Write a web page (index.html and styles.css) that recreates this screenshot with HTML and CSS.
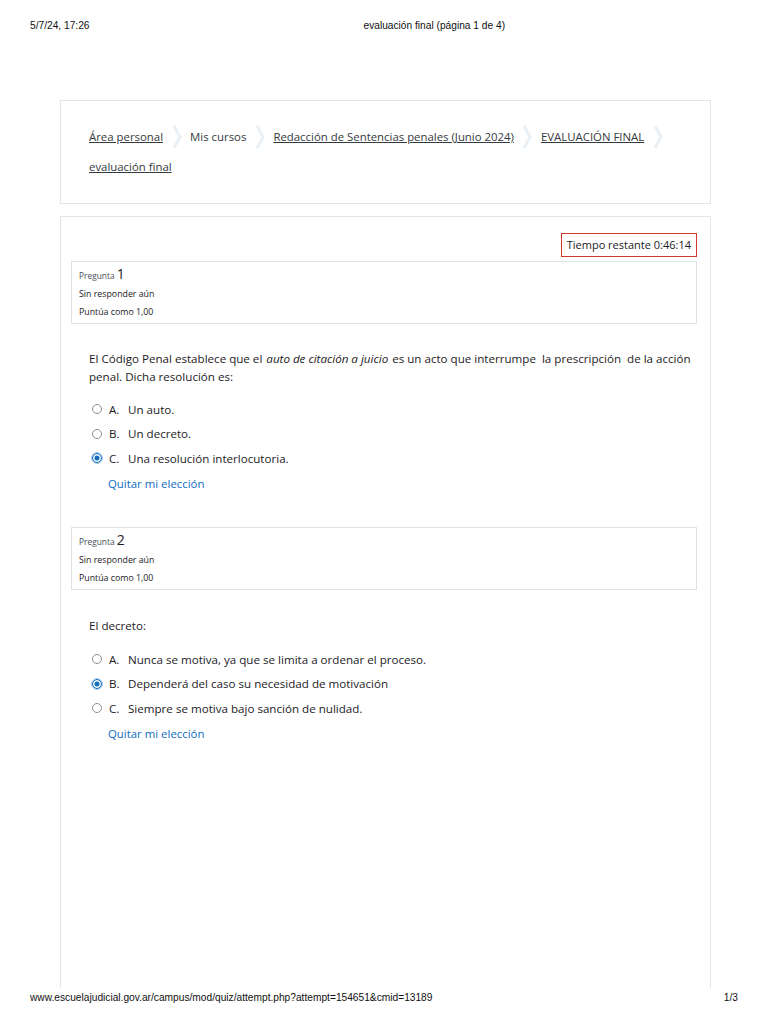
FILE: index.html
```html
<!DOCTYPE html>
<html lang="es">

<head>
    <meta charset="UTF-8">
    <meta name="viewport" content="width=device-width, initial-scale=1.0">
    <title>evaluación final (página 1 de 4)</title>
    <link rel="stylesheet" href="styles.css">
</head>

<body>
    <div class="print-head">
        <span class="print-date">5/7/24, 17:26</span>
        <span class="print-title">evaluación final (página 1 de 4)</span>
    </div>

    <div class="page">
        <nav class="crumbs">
            <a href="#">Área personal</a>
            <span class="sep"><svg viewBox="0 0 10 24" width="10" height="24"><polyline points="2,1 8,12 2,23" /></svg></span>
            <span class="plain">Mis cursos</span>
            <span class="sep"><svg viewBox="0 0 10 24" width="10" height="24"><polyline points="2,1 8,12 2,23" /></svg></span>
            <a href="#">Redacción de Sentencias penales (Junio 2024)</a>
            <span class="sep"><svg viewBox="0 0 10 24" width="10" height="24"><polyline points="2,1 8,12 2,23" /></svg></span>
            <a href="#">EVALUACIÓN FINAL</a>
            <span class="sep"><svg viewBox="0 0 10 24" width="10" height="24"><polyline points="2,1 8,12 2,23" /></svg></span>
            <a href="#" class="last">evaluación final</a>
        </nav>

        <div class="quiz">
            <div class="timer-row">
                <div class="timer">Tiempo restante 0:46:14</div>
            </div>

            <div class="info">
                <div class="qno">Pregunta <span class="num">1</span></div>
                <div class="state">Sin responder aún</div>
                <div class="grade">Puntúa como 1,00</div>
            </div>

            <div class="question">
                <p class="qtext">El Código Penal establece que el <em>auto de citación a juicio</em> es un acto que interrumpe&nbsp; la prescripción&nbsp; de la acción penal. Dicha resolución es:</p>
                <div class="answers">
                    <label class="option"><span class="radio"></span><span class="letter">A.</span><span>Un auto.</span></label>
                    <label class="option"><span class="radio"></span><span class="letter">B.</span><span>Un decreto.</span></label>
                    <label class="option"><span class="radio checked"></span><span class="letter">C.</span><span>Una resolución interlocutoria.</span></label>
                </div>
                <a href="#" class="clear">Quitar mi elección</a>
            </div>

            <div class="info second">
                <div class="qno">Pregunta <span class="num">2</span></div>
                <div class="state">Sin responder aún</div>
                <div class="grade">Puntúa como 1,00</div>
            </div>

            <div class="question">
                <p class="qtext short">El decreto:</p>
                <div class="answers">
                    <label class="option"><span class="radio"></span><span class="letter">A.</span><span>Nunca se motiva, ya que se limita a ordenar el proceso.</span></label>
                    <label class="option"><span class="radio checked"></span><span class="letter">B.</span><span>Dependerá del caso su necesidad de motivación</span></label>
                    <label class="option"><span class="radio"></span><span class="letter">C.</span><span>Siempre se motiva bajo sanción de nulidad.</span></label>
                </div>
                <a href="#" class="clear">Quitar mi elección</a>
            </div>
        </div>
    </div>

    <div class="print-foot">
        <span>www.escuelajudicial.gov.ar/campus/mod/quiz/attempt.php?attempt=154651&amp;cmid=13189</span>
        <span>1/3</span>
    </div>
</body>

</html>
```

FILE: styles.css
```css
body {
    margin: 0;
    padding: 0;
    background: #fff;
    font-family: "Open Sans", sans-serif;
    color: #1d2125;
    width: 768px;
    height: 1024px;
    overflow: hidden;
}

a {
    color: #343a40;
}

.print-head,
.print-foot {
    font-family: "Liberation Sans", Arial, sans-serif;
    font-size: 10.2px;
    color: #111;
    display: flex;
    padding: 0 30px;
}

.print-head {
    padding-top: 20px;
    height: 12px;
    line-height: 12px;
}

.print-title {
    margin-left: 274px;
}

.print-foot {
    justify-content: space-between;
    line-height: 12px;
    margin-top: 4px;
}

.page {
    padding: 0 57px 0 60px;
    margin-top: 68px;
}

/* breadcrumb */
.crumbs {
    border: 1px solid #e3e6e9;
    padding: 21px 28px;
    display: flex;
    flex-wrap: wrap;
    align-items: center;
    font-size: 11.4px;
    line-height: 30px;
}

.crumbs a,
.crumbs .plain {
    color: #343a40;
}

.crumbs .sep {
    display: flex;
    align-items: center;
    width: 27px;
    justify-content: center;
}

.crumbs .sep polyline {
    fill: none;
    stroke: #e9f0f6;
    stroke-width: 3;
}

.crumbs .last {
    flex-basis: 100%;
}

/* quiz */
.quiz {
    margin-top: 12px;
    border: 1px solid #e3e6e9;
    border-bottom: none;
    padding: 16px 13px 0 10px;
    height: 755px;
}

.timer-row {
    display: flex;
    justify-content: flex-end;
}

.timer {
    border: 1px solid #d0382b;
    height: 22px;
    line-height: 22px;
    padding: 0 5px;
    font-size: 11px;
}

.info {
    margin-top: 4px;
    border: 1px solid #dee2e6;
    padding: 3px 7px 2px;
    font-size: 8.8px;
}

.info.second {
    margin-top: 34px;
}

.qno {
    height: 18px;
    line-height: 18px;
    color: #495057;
    font-size: 8.4px;
}

.qno .num {
    font-size: 14px;
    color: #1d2125;
}

.state {
    margin-top: 2px;
    height: 18px;
    line-height: 18px;
}

.grade {
    height: 18px;
    line-height: 18px;
}

.question {
    padding-left: 18px;
}

.qtext {
    margin: 26px 0 0;
    font-size: 11.6px;
    line-height: 18px;
}

.qtext em {
    margin: 0 1px;
}

.qtext.short {
    margin-top: 27px;
}

.answers {
    margin-top: 11px;
    padding-left: 3px;
}

.question .qtext.short + .answers {
    margin-top: 12px;
}

.option {
    display: flex;
    align-items: center;
    height: 24.5px;
    font-size: 11.6px;
}

.radio {
    width: 8px;
    height: 8px;
    border: 1px solid #8a8f94;
    border-radius: 50%;
    margin-right: 7px;
}

.radio.checked {
    border-color: #0f6cbf;
    background: #0f6cbf;
    box-shadow: inset 0 0 0 1.5px #fff;
    outline: 1px solid #a9c9ec;
}

.letter {
    width: 19px;
}

.clear {
    display: block;
    margin: 4.5px 0 0 19px;
    font-size: 11.4px;
    line-height: 18px;
    color: #0f6cbf;
    text-decoration: none;
}
```
